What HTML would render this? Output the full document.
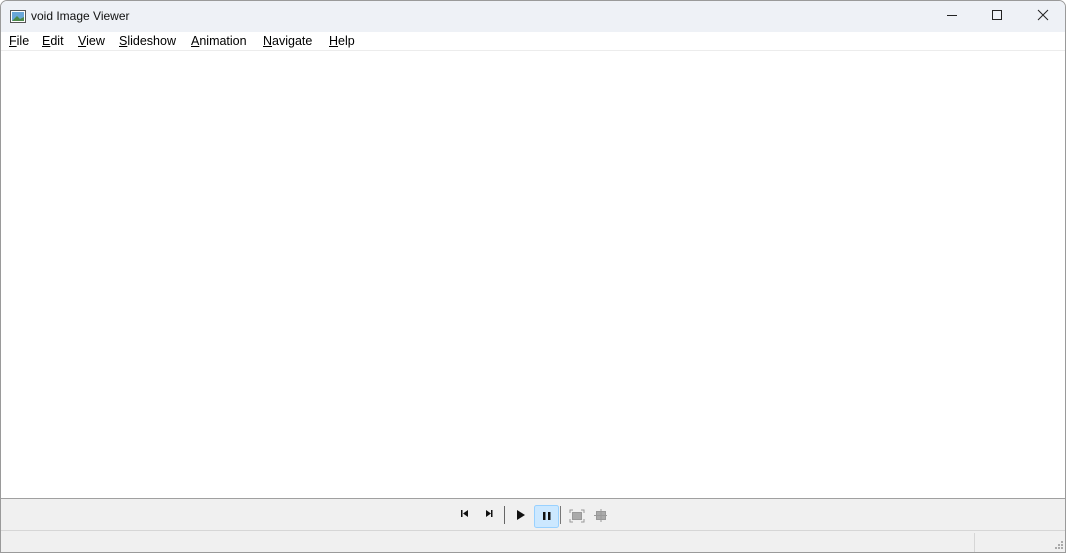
<!DOCTYPE html>
<html><head><style>
*{margin:0;padding:0;box-sizing:border-box}
body{width:1066px;height:553px;overflow:hidden;background:#fff;font-family:"Liberation Sans",sans-serif;position:relative}
.win{position:absolute;left:0;top:0;width:1066px;height:553px;border:1px solid #9a9a9a;border-radius:7px 7px 0 0;overflow:hidden;background:#fff}
.title{position:absolute;left:0;top:0;width:1064px;height:31px;background:#eef1f6}
.title span{position:absolute;left:30px;top:8px;font-size:12px;color:#111}
.menu{position:absolute;left:0;top:31px;width:1064px;height:19px;background:#fff;border-bottom:1px solid #ececec;font-size:12.5px;color:#000}
.menu span{position:absolute;top:2px}
.menu u{text-decoration:underline}
.tb{position:absolute;left:0;top:497px;width:1064px;height:33px;background:#f0f0f0;border-top:1px solid #a0a0a0;border-bottom:1px solid #d6d6d6}
.st{position:absolute;left:0;top:530px;width:1064px;height:22px;background:#f0f0f0}
</style></head><body><div class="win">
<div class="title">
<svg style="position:absolute;left:9px;top:9px" width="16" height="13"><rect x="0.5" y="0.5" width="15" height="12" fill="#fff" stroke="#555"/><rect x="2" y="2" width="12" height="9" fill="#6aa7d8"/><path d="M2 11 L7 6 L10 9 L14 7 L14 11Z" fill="#4c8a4a"/></svg>
<span>void Image Viewer</span>
<svg style="position:absolute;left:940px;top:7px" width="110" height="16" fill="none" stroke="#222" stroke-width="1">
<path d="M6 7.5H16"/><rect x="51.5" y="2.5" width="9" height="9"/><path d="M97 2L107 12M107 2L97 12"/></svg>
</div>
<div class="menu">
<span style="left:8px"><u>F</u>ile</span>
<span style="left:41px"><u>E</u>dit</span>
<span style="left:77px"><u>V</u>iew</span>
<span style="left:118px"><u>S</u>lideshow</span>
<span style="left:190px"><u>A</u>nimation</span>
<span style="left:262px"><u>N</u>avigate</span>
<span style="left:328px"><u>H</u>elp</span>
</div>
<div class="tb">
<svg style="position:absolute;left:454px;top:3px" width="160" height="26">
<path d="M6 8h1.5v7H6z M13 8v7L8 11.5z" fill="#111"/>
<path d="M31 8v7l5-3.5z M36 8h1.5v7H36z" fill="#111"/>
<rect x="49" y="4" width="1" height="18" fill="#666"/>
<path d="M62 8v10l8-5z" fill="#111"/>
<rect x="79.5" y="3.5" width="24" height="22" rx="2" fill="#cce8ff" stroke="#99d1ff"/>
<rect x="88" y="10" width="2.5" height="8" fill="#111"/><rect x="93" y="10" width="2.5" height="8" fill="#111"/>
<rect x="105" y="4" width="1" height="18" fill="#777"/>
<g fill="none" stroke="#999"><rect x="117.5" y="10.5" width="9" height="7" fill="#aaa"/><path d="M115 11V8h3M129 11V8h-3M115 17v3h3M129 17v3h-3"/></g>
<g fill="none" stroke="#999"><rect x="141.5" y="9.5" width="9" height="8" fill="#aaa"/><path d="M139 13.5h13M146 7v13"/></g>
</svg>
</div>
<div class="st"><div style="position:absolute;left:973px;top:2px;width:1px;height:19px;background:#d6d6d6"></div>
<svg style="position:absolute;left:1054px;top:10px" width="9" height="9" fill="#aaa"><rect x="6" y="0" width="2" height="2"/><rect x="3" y="3" width="2" height="2"/><rect x="6" y="3" width="2" height="2"/><rect x="0" y="6" width="2" height="2"/><rect x="3" y="6" width="2" height="2"/><rect x="6" y="6" width="2" height="2"/></svg>
</div>
</div></body></html>
